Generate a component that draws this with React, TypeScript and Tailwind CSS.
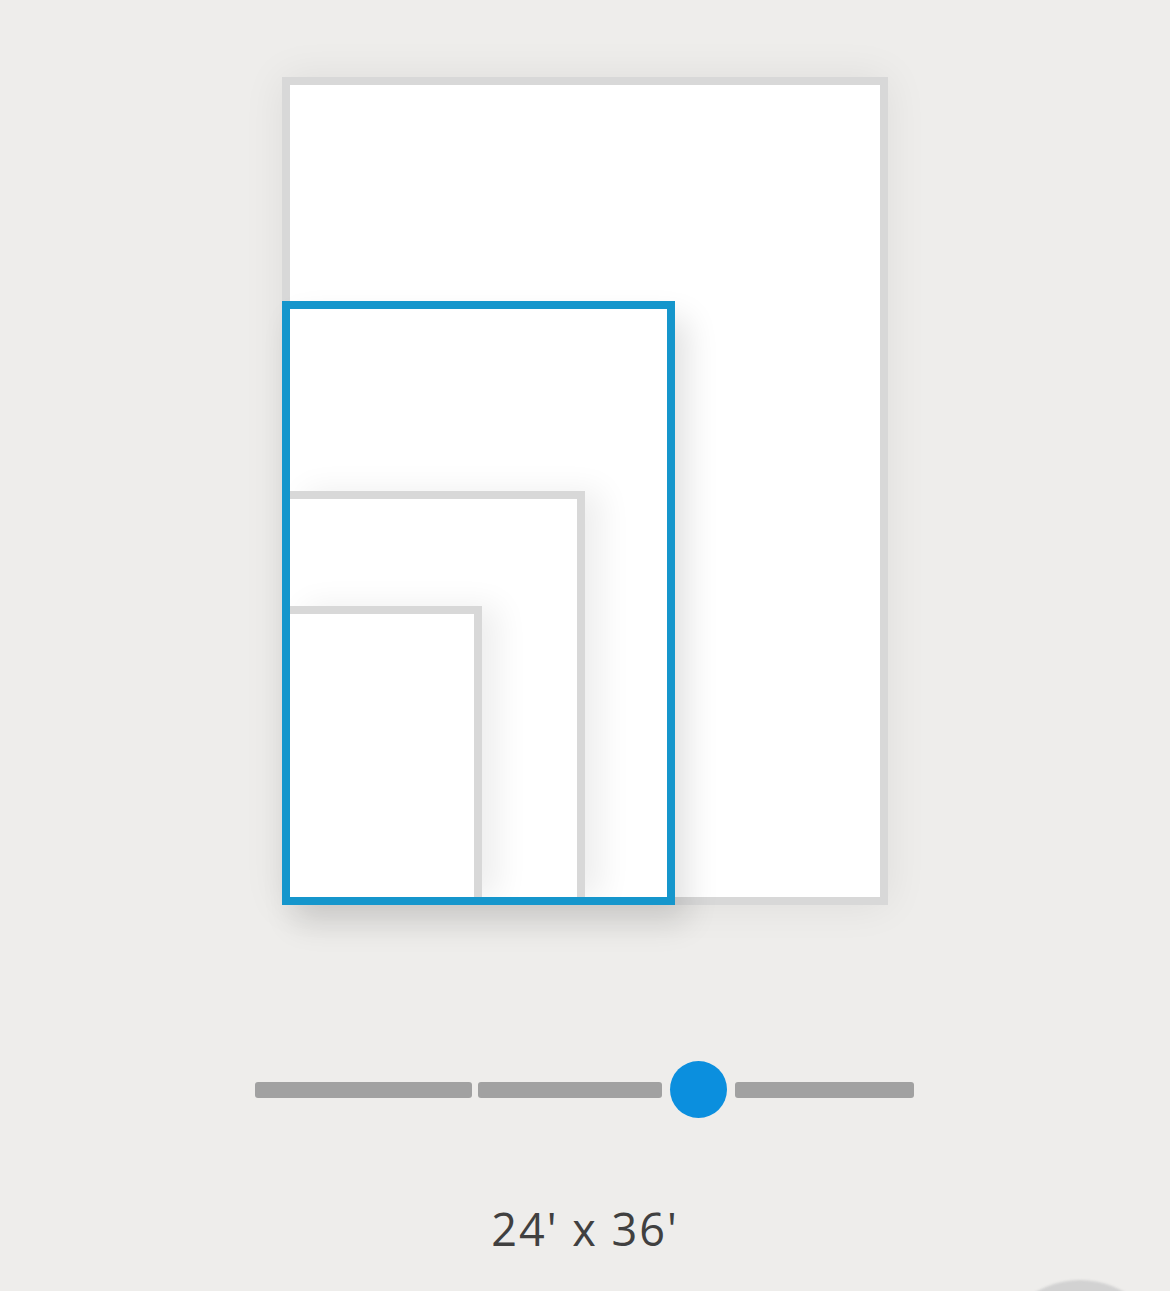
import React from "react";

const TRACK = "h-4 rounded-[3px] bg-[#a1a1a1]";

export default function App() {
  return (
    <div className="relative h-[1291px] w-full overflow-hidden bg-[#eeedeb]">
      <div className="flex flex-col items-center">
        {/* poster size preview */}
        <div className="relative mt-[77px] h-[828px] w-[606px]">
          <div className="absolute inset-0 border-[8px] border-[#d8d8d8] bg-white shadow-[0_0_40px_rgba(0,0,0,0.07)]" />
          <div className="absolute bottom-0 left-0 h-[604px] w-[393px] border-[8px] border-[#1596cc] bg-white shadow-[12px_18px_30px_rgba(0,0,0,0.12)]">
            <div className="relative h-full w-full overflow-hidden">
              <div className="absolute bottom-0 left-0 h-[406px] w-[295px] border-t-[8px] border-r-[8px] border-[#d8d8d8] bg-white shadow-[16px_0_30px_rgba(0,0,0,0.07)]" />
              <div className="absolute bottom-0 left-0 h-[291px] w-[192px] border-t-[8px] border-r-[8px] border-[#d8d8d8] bg-white shadow-[16px_0_30px_rgba(0,0,0,0.07)]" />
            </div>
          </div>
        </div>

        {/* size slider */}
        <div className="mt-[156px] flex w-[660px] items-center">
          <div className={`${TRACK} w-[217px]`} />
          <div className={`${TRACK} ml-[6px] w-[184px]`} />
          <div className="ml-[8px] h-[57px] w-[57px] rounded-full bg-[#0b8fde]" />
          <div className={`${TRACK} ml-[8px] w-[179px]`} />
        </div>

        <p className="mt-[88px] text-[45px] font-medium leading-none tracking-[2px] text-[#404040] [font-family:'Open_Sans',sans-serif]">
          24&apos; x 36&apos;
        </p>
      </div>

      <div className="absolute left-[992px] top-[1280px] h-[176px] w-[176px] rounded-full bg-[#d2d2d2] blur-[1px]" />
    </div>
  );
}
